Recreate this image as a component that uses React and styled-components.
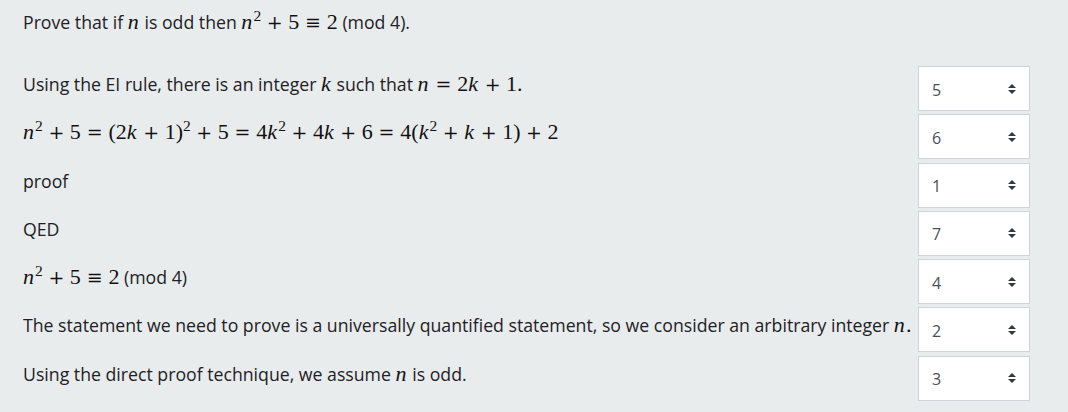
import styled, { createGlobalStyle } from 'styled-components';

const GlobalStyle = createGlobalStyle`
  html, body {
    margin: 0;
    padding: 0;
    background: #e9eced;
  }
  body {
    font-family: "Open Sans", "Noto Sans", sans-serif;
    font-size: 17.7px;
    color: #1d2125;
  }
`;

const Page = styled.div`
  width: 1068px;
  height: 412px;
  box-sizing: border-box;
  padding: 9px 0 0 23px;
  background: #e9eced;
  overflow: hidden;
`;

const Question = styled.p`
  margin: 0 0 31px;
  line-height: 26px;
`;

const Rows = styled.div`
  display: grid;
  grid-template-columns: 888px 112px;
  column-gap: 7px;
  row-gap: 3.25px;
`;

const Text = styled.div`
  padding-top: 5px;
  line-height: 26px;
  white-space: nowrap;
`;

const Select = styled.div`
  height: 45px;
  box-sizing: border-box;
  display: flex;
  align-items: center;
  justify-content: space-between;
  padding: 0 13px 0 13px;
  background: #fff;
  border: 1px solid #ced4da;
  color: #495057;
  font-size: 16px;
`;

const Value = styled.span`
  padding-top: 2px;
`;

const M = styled.span`
  font-family: "Liberation Serif", "Times New Roman", serif;
  font-size: 22px;
  line-height: 0;
  color: #111;
  font-style: ${(p) => (p.$i ? 'italic' : 'normal')};
  padding-right: ${(p) => (p.$i ? '0.05em' : '0')};
`;

const Sup = styled.sup`
  font-family: "Liberation Serif", serif;
  font-size: 15.5px;
  color: #111;
  font-style: normal;
  vertical-align: 8px;
  line-height: 0;
`;

const Op = styled.span`
  display: inline-block;
  width: 17px;
  text-align: center;
  line-height: 0;
  font-family: "DejaVu Serif", serif;
  font-size: 19px;
  color: #111;
  margin: 0 ${(p) => (p.$rel ? '5.3px' : '5px')};
`;

const Arrows = () => (
  <svg width="8" height="10" viewBox="0 0 4 5">
    <path fill="#343a40" d="M2 0L0 2h4zm0 5L0 3h4z" />
  </svg>
);

const V = ({ c }) => <M $i>{c}</M>;
const N = ({ c }) => <M>{c}</M>;
const S = ({ c = '2' }) => <Sup>{c}</Sup>;

const rows = [
  {
    v: '5',
    t: (
      <>
        Using the EI rule, there is an integer <V c="k" /> such that <V c="n" />
        <Op $rel>=</Op>
        <N c="2" />
        <V c="k" />
        <Op>+</Op>
        <N c="1." />
      </>
    ),
  },
  {
    v: '6',
    t: (
      <>
        <V c="n" />
        <S />
        <Op>+</Op>
        <N c="5" />
        <Op $rel>=</Op>
        <N c="(2" />
        <V c="k" />
        <Op>+</Op>
        <N c="1)" />
        <S />
        <Op>+</Op>
        <N c="5" />
        <Op $rel>=</Op>
        <N c="4" />
        <V c="k" />
        <S />
        <Op>+</Op>
        <N c="4" />
        <V c="k" />
        <Op>+</Op>
        <N c="6" />
        <Op $rel>=</Op>
        <N c="4(" />
        <V c="k" />
        <S />
        <Op>+</Op>
        <V c="k" />
        <Op>+</Op>
        <N c="1)" />
        <Op>+</Op>
        <N c="2" />
      </>
    ),
  },
  { v: '1', t: 'proof' },
  { v: '7', t: 'QED' },
  {
    v: '4',
    t: (
      <>
        <V c="n" />
        <S />
        <Op>+</Op>
        <N c="5" />
        <Op $rel>≡</Op>
        <N c="2" /> (mod 4)
      </>
    ),
  },
  {
    v: '2',
    t: (
      <>
        The statement we need to prove is a universally quantified statement, so we consider an
        arbitrary integer <V c="n" />
        <N c="." />
      </>
    ),
  },
  {
    v: '3',
    t: (
      <>
        Using the direct proof technique, we assume <V c="n" /> is odd.
      </>
    ),
  },
];

export default function App() {
  return (
    <Page>
      <GlobalStyle />
      <Question>
        Prove that if <V c="n" /> is odd then <V c="n" />
        <S />
        <Op>+</Op>
        <N c="5" />
        <Op $rel>≡</Op>
        <N c="2" /> (mod 4).
      </Question>
      <Rows>
        {rows.map((r, i) => (
          <>
            <Text key={'t' + i}>{r.t}</Text>
            <Select key={'s' + i}>
              <Value>{r.v}</Value>
              <Arrows />
            </Select>
          </>
        ))}
      </Rows>
    </Page>
  );
}
